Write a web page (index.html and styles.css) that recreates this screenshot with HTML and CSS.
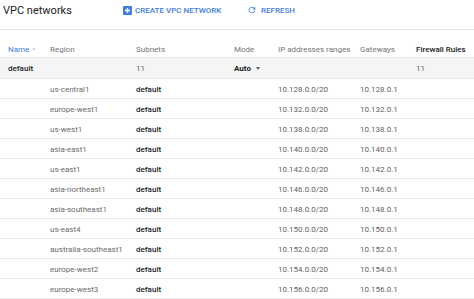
FILE: index.html
```html
<!DOCTYPE html>
<html>
<head>
<meta charset="utf-8">
<link rel="stylesheet" href="styles.css">
</head>
<body>
<div class="topbar">
  <h1 class="title">VPC networks</h1>
  <div class="action create">
    <svg class="icon-add" width="9" height="9" viewBox="0 0 9 9"><rect x="0" y="0" width="9" height="9" rx="1" fill="#3f7de0"/><path d="M4.5 2v5M2 4.5h5" stroke="#fff" stroke-width="1.4"/></svg>
    <span>CREATE VPC NETWORK</span>
  </div>
  <div class="action refresh">
    <svg class="icon-refresh" width="10" height="10" viewBox="0 0 24 24"><path fill="#3f7de0" d="M17.65 6.35A7.958 7.958 0 0 0 12 4c-4.42 0-7.99 3.58-7.99 8s3.57 8 7.99 8c3.73 0 6.84-2.55 7.73-6h-2.08A5.99 5.99 0 0 1 12 18c-3.31 0-6-2.69-6-6s2.69-6 6-6c1.66 0 3.14 0.69 4.22 1.78L13 11h7V4l-2.35 2.35z"/></svg>
    <span>REFRESH</span>
  </div>
</div>
<div class="table">
  <div class="row head">
    <div class="c name-h">Name <span class="sort">&#8964;</span></div>
    <div class="c">Region</div>
    <div class="c">Subnets</div>
    <div class="c">Mode</div>
    <div class="c">IP addresses ranges</div>
    <div class="c">Gateways</div>
    <div class="c fw-h">Firewall Rules</div>
  </div>
  <div class="row net">
    <div class="c dark">default</div>
    <div class="c"></div>
    <div class="c gray">11</div>
    <div class="c mode">Auto <span class="caret"></span></div>
    <div class="c"></div>
    <div class="c"></div>
    <div class="c gray">11</div>
  </div>
  <div class="row sub"><div class="c"></div><div class="c reg">us-central1</div><div class="c sn">default</div><div class="c"></div><div class="c ip">10.128.0.0/20</div><div class="c ip">10.128.0.1</div><div class="c"></div></div>
  <div class="row sub"><div class="c"></div><div class="c reg">europe-west1</div><div class="c sn">default</div><div class="c"></div><div class="c ip">10.132.0.0/20</div><div class="c ip">10.132.0.1</div><div class="c"></div></div>
  <div class="row sub"><div class="c"></div><div class="c reg">us-west1</div><div class="c sn">default</div><div class="c"></div><div class="c ip">10.138.0.0/20</div><div class="c ip">10.138.0.1</div><div class="c"></div></div>
  <div class="row sub"><div class="c"></div><div class="c reg">asia-east1</div><div class="c sn">default</div><div class="c"></div><div class="c ip">10.140.0.0/20</div><div class="c ip">10.140.0.1</div><div class="c"></div></div>
  <div class="row sub"><div class="c"></div><div class="c reg">us-east1</div><div class="c sn">default</div><div class="c"></div><div class="c ip">10.142.0.0/20</div><div class="c ip">10.142.0.1</div><div class="c"></div></div>
  <div class="row sub"><div class="c"></div><div class="c reg">asia-northeast1</div><div class="c sn">default</div><div class="c"></div><div class="c ip">10.146.0.0/20</div><div class="c ip">10.146.0.1</div><div class="c"></div></div>
  <div class="row sub"><div class="c"></div><div class="c reg">asia-southeast1</div><div class="c sn">default</div><div class="c"></div><div class="c ip">10.148.0.0/20</div><div class="c ip">10.148.0.1</div><div class="c"></div></div>
  <div class="row sub"><div class="c"></div><div class="c reg">us-east4</div><div class="c sn">default</div><div class="c"></div><div class="c ip">10.150.0.0/20</div><div class="c ip">10.150.0.1</div><div class="c"></div></div>
  <div class="row sub"><div class="c"></div><div class="c reg">australia-southeast1</div><div class="c sn">default</div><div class="c"></div><div class="c ip">10.152.0.0/20</div><div class="c ip">10.152.0.1</div><div class="c"></div></div>
  <div class="row sub"><div class="c"></div><div class="c reg">europe-west2</div><div class="c sn">default</div><div class="c"></div><div class="c ip">10.154.0.0/20</div><div class="c ip">10.154.0.1</div><div class="c"></div></div>
  <div class="row sub"><div class="c"></div><div class="c reg">europe-west3</div><div class="c sn">default</div><div class="c"></div><div class="c ip">10.156.0.0/20</div><div class="c ip">10.156.0.1</div><div class="c"></div></div>
</div>
</body>
</html>
```
FILE: styles.css
```css
html, body {
  margin: 0;
  padding: 0;
  background: #fff;
  font-family: Roboto, "Liberation Sans", sans-serif;
  overflow: hidden;
}
.topbar {
  display: flex;
  align-items: center;
  height: 20px;
  padding: 0 0 9px 3px;
  border-bottom: 1px solid #e4e4e4;
}
.title {
  margin: 0;
  width: 120px;
  font-size: 11px;
  font-weight: 400;
  color: #212121;
}
.action {
  display: flex;
  align-items: center;
  font-size: 8px;
  font-weight: 500;
  color: #3f7de0;
}
.create { gap: 3px; width: 124px; }
.refresh { gap: 4px; }
.icon-add, .icon-refresh { display: block; }
.table { display: flex; flex-direction: column; }
.row {
  display: grid;
  grid-template-columns: 42px 86px 98px 44px 82px 56px 1fr;
  padding-left: 8px;
  align-items: center;
  font-size: 8px;
  border-bottom: 1px solid #e8e8e8;
  box-sizing: border-box;
}
.head {
  height: 28px;
  padding-top: 11px;
  color: #757575;
}
.name-h { color: #3f7de0; }
.sort { color: #8aa4d6; font-size: 7px; position: relative; top: -2px; }
.fw-h { color: #212121; font-weight: 500; }
.net {
  height: 21px;
  background: #f5f5f5;
}
.dark { color: #212121; font-weight: 500; }
.gray { color: #616161; }
.mode { color: #212121; font-weight: 700; display: flex; align-items: center; gap: 5px; }
.caret {
  width: 0; height: 0;
  border-left: 2.5px solid transparent;
  border-right: 2.5px solid transparent;
  border-top: 3px solid #616161;
}
.sub { height: 20px; padding-top: 2px; }
.reg { color: #6b6b6b; }
.sn { color: #212121; font-weight: 500; }
.ip { color: #616161; }
```
